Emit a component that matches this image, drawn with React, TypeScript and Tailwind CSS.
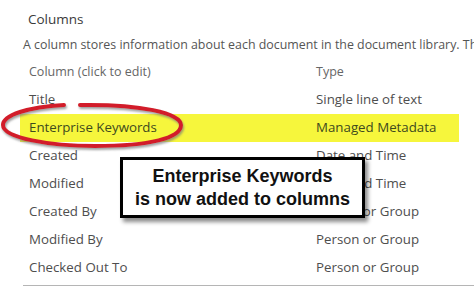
import React from "react";

const rows: [string, string][] = [
  ["Title", "Single line of text"],
  ["Enterprise Keywords", "Managed Metadata"],
  ["Created", "Date and Time"],
  ["Modified", "Date and Time"],
  ["Created By", "Person or Group"],
  ["Modified By", "Person or Group"],
  ["Checked Out To", "Person or Group"],
];

export default function App() {
  return (
    <div
      className="relative w-[474px] h-[299px] overflow-hidden bg-white text-[#4e4e4e]"
      style={{ fontFamily: '"Open Sans", "Noto Sans", sans-serif' }}
    >
      <div className="pl-[28px] pt-[9px] text-[13.5px] leading-[20px] text-[#3a3a3a]">Columns</div>
      <div className="pl-[23px] pt-[7px] text-[12.4px] leading-[18px] whitespace-nowrap text-[#555]">
        A column stores information about each document in the document library. The following columns are currently available in this document library:
      </div>
      <div className="mt-[4px] ml-[20px] w-[439px]">
        <div className="flex h-[28px] items-center text-[12.5px] text-[#666]">
          <div className="w-[296px] pl-[9px]">Column (click to edit)</div>
          <div>Type</div>
        </div>
        {rows.map(([name, type], i) => (
          <div
            key={name}
            className={`flex h-[28px] items-center text-[13.3px] ${i === 1 ? "bg-[#f6f63c] text-[#3e4a1e]" : ""}`}
          >
            <div className="w-[296px] pl-[9px]">{name}</div>
            <div>{type}</div>
          </div>
        ))}
      </div>
      <div className="ml-[23px] mt-[3px] h-px bg-[#b5b5b5]" />

      {/* red ellipse annotation */}
      <svg className="absolute left-0 top-[98px]" width="190" height="56" viewBox="0 0 190 56">
        <defs>
          <filter id="sh" x="-10%" y="-20%" width="120%" height="150%">
            <feDropShadow dx="1" dy="2" stdDeviation="1.2" floodColor="#777" floodOpacity="0.7" />
          </filter>
        </defs>
        <path
          d="M 64 7 C 28 9, 3 17, 3 27 C 3 40, 50 48, 95 48 C 150 48, 181 40, 181 27 C 181 15, 140 6, 80 7"
          fill="none"
          stroke="#d21f2a"
          strokeWidth="4"
          strokeLinecap="round"
          filter="url(#sh)"
        />
      </svg>

      {/* callout box */}
      <div
        className="absolute left-[120px] top-[157px] w-[245px] h-[61px] bg-white border-[3px] border-black flex flex-col items-center justify-center text-[18px] font-bold leading-[23px] text-[#111] shadow-[3px_4px_4px_rgba(0,0,0,0.45)]"
        style={{ fontFamily: '"Liberation Sans", Arial, sans-serif' }}
      >
        <div>Enterprise Keywords</div>
        <div>is now added to columns</div>
      </div>
    </div>
  );
}
